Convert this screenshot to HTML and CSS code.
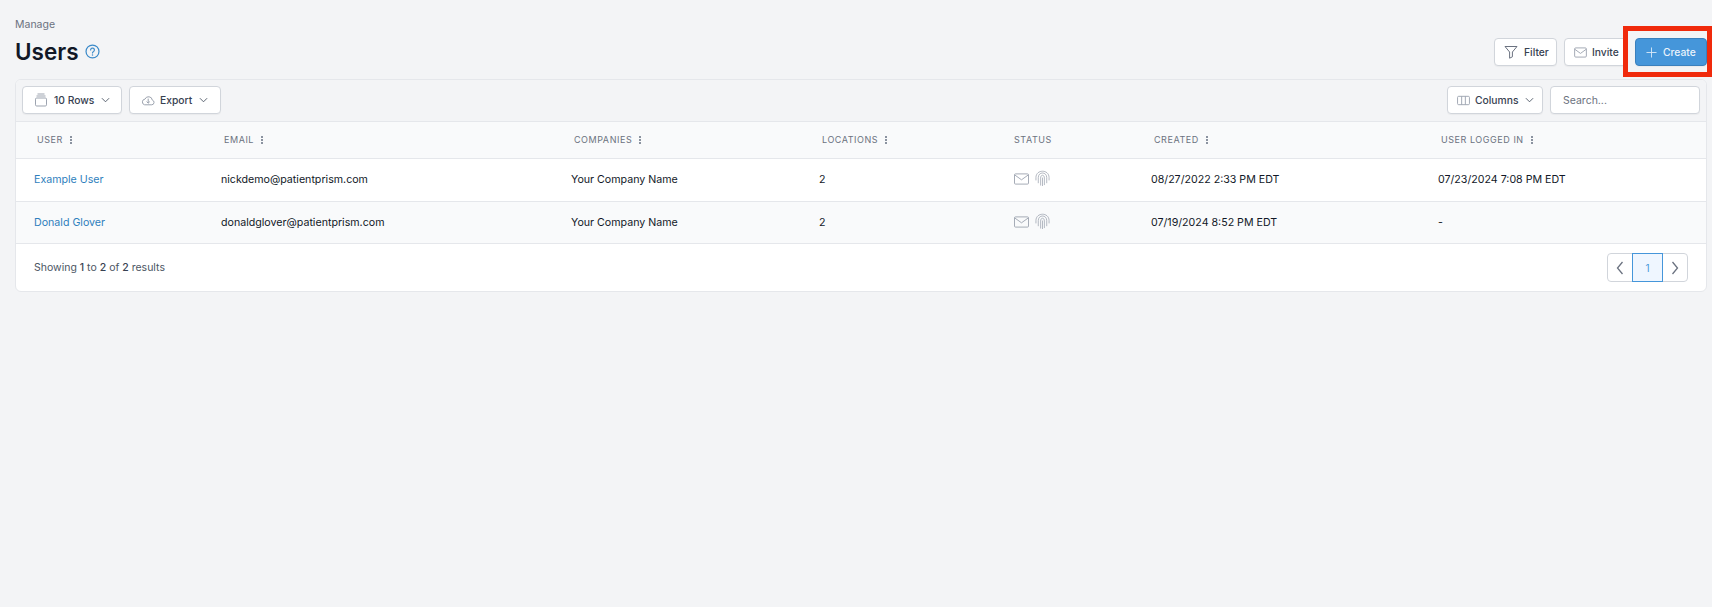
FILE: index.html
```html
<!DOCTYPE html>
<html lang="en">
<head>
<meta charset="utf-8">
<title>Users</title>
<link rel="stylesheet" href="styles.css">
</head>
<body>
<header class="page-head">
  <div class="titles">
    <div class="crumb">Manage</div>
    <div class="title-row">
      <h1>Users</h1>
      <svg class="help" viewBox="0 0 16 16"><circle cx="8" cy="8" r="6.900"/><path d="M6 6.300a2 2 0 1 1 3.100 1.700c-.7.4-1.100.8-1.100 1.600"/><circle class="dot" cx="8" cy="11.700" r=".8"/></svg>
    </div>
  </div>
  <div class="actions">
    <button class="btn btn-filter"><svg class="ic ic-filter" viewBox="0 0 14 14"><path d="M1 1.500h12L8.400 7v4.800l-2.800 1.400V7z"/></svg>Filter</button>
    <button class="btn btn-invite"><svg class="ic ic-mail" viewBox="0 0 14 12"><rect x=".6" y="1" width="12.800" height="10" rx="1.200"/><path d="M.8 2.500 7 7l6.200-4.500"/></svg>Invite</button>
    <span class="create-wrap">
      <button class="btn btn-primary"><svg class="ic ic-plus" viewBox="0 0 12 12"><path d="M6 .5v11M.5 6h11"/></svg>Create</button>
      <span class="highlight"></span>
    </span>
  </div>
</header>
<main class="card">
  <div class="toolbar">
    <div class="tool-group">
      <button class="btn btn-rows"><svg class="ic ic-rows" viewBox="0 0 14 14"><path d="M3.500 1h7M2.500 3h9"/><rect x="1.500" y="5" width="11" height="8" rx="1.200"/></svg>10 Rows<svg class="chev" viewBox="0 0 10 6"><path d="M1 1l4 4 4-4"/></svg></button>
      <button class="btn btn-export"><svg class="ic ic-cloud" viewBox="0 0 14 11"><path d="M3.600 9.800h7.200a2.400 2.400 0 0 0 .5-4.700 3.800 3.800 0 0 0-7.300-1A2.900 2.900 0 0 0 3.600 9.800z"/><path d="M7.200 3.600v4.400M5.600 6.600l1.600 1.600 1.600-1.600"/></svg>Export<svg class="chev" viewBox="0 0 10 6"><path d="M1 1l4 4 4-4"/></svg></button>
    </div>
    <div class="tool-group">
      <button class="btn btn-cols"><svg class="ic ic-cols" viewBox="0 0 14 11"><rect x=".6" y="1" width="12.800" height="9" rx="1.200"/><path d="M5 1v9M9 1v9"/></svg>Columns<svg class="chev" viewBox="0 0 10 6"><path d="M1 1l4 4 4-4"/></svg></button>
      <input class="search" type="text" placeholder="Search...">
    </div>
  </div>
  <div class="row head">
    <div class="h">USER<i class="kebab"></i></div>
    <div class="h">EMAIL<i class="kebab"></i></div>
    <div class="h">COMPANIES<i class="kebab"></i></div>
    <div class="h">LOCATIONS<i class="kebab"></i></div>
    <div class="h h-plain">STATUS</div>
    <div class="h">CREATED<i class="kebab"></i></div>
    <div class="h">USER LOGGED IN<i class="kebab"></i></div>
  </div>
  <div class="row body first">
    <div><a href="#">Example User</a></div>
    <div>nickdemo@patientprism.com</div>
    <div>Your Company Name</div>
    <div>2</div>
    <div class="status">
      <svg class="st-mail" viewBox="0 0 15 12"><rect x=".5" y=".9" width="14" height="10.200" rx="1"/><path d="M.8 2l6.700 4.800L14.200 2"/></svg>
      <svg class="st-finger" viewBox="0 0 16 18"><path d="M1 11V8C1-1 15-1 15 8V11M3.500 14V8C3.500 1.500 12.500 1.500 12.500 8V14M6 16.500V8.500C6 4.500 10 4.500 10 8.500V16M8 8V17"/></svg>
    </div>
    <div>08/27/2022 2:33 PM EDT</div>
    <div>07/23/2024 7:08 PM EDT</div>
  </div>
  <div class="row body alt">
    <div><a href="#">Donald Glover</a></div>
    <div>donaldglover@patientprism.com</div>
    <div>Your Company Name</div>
    <div>2</div>
    <div class="status">
      <svg class="st-mail" viewBox="0 0 15 12"><rect x=".5" y=".9" width="14" height="10.200" rx="1"/><path d="M.8 2l6.700 4.800L14.200 2"/></svg>
      <svg class="st-finger" viewBox="0 0 16 18"><path d="M1 11V8C1-1 15-1 15 8V11M3.500 14V8C3.500 1.500 12.500 1.500 12.500 8V14M6 16.500V8.500C6 4.500 10 4.500 10 8.500V16M8 8V17"/></svg>
    </div>
    <div>07/19/2024 8:52 PM EDT</div>
    <div>-</div>
  </div>
  <footer class="foot">
    <div class="results">Showing <b>1</b> to <b>2</b> of <b>2</b> results</div>
    <nav class="pager">
      <span class="pg"><svg viewBox="0 0 8 14"><path d="M6.500 1 1.500 7l5 6"/></svg></span>
      <span class="pg cur">1</span>
      <span class="pg"><svg viewBox="0 0 8 14"><path d="M1.500 1l5 6-5 6"/></svg></span>
    </nav>
  </footer>
</main>
</body>
</html>
```
FILE: styles.css
```css
* { box-sizing: border-box; }
html, body { margin: 0; height: 100%; }
body {
  background: #f3f4f6;
  font-family: Inter, "Liberation Sans", sans-serif;
  font-size: 12px;
  color: #111827;
  padding: 0 5px 0 15px;
  overflow: hidden;
}
.page-head {
  display: flex;
  justify-content: space-between;
  align-items: flex-end;
  height: 79px;
  padding-bottom: 13px;
}
.crumb { font-size: 10.500px; line-height: 16px; color: #6b7280; margin-top: 16px; margin-bottom: 5px; }
.title-row { display: flex; align-items: center; gap: 6px; height: 28px; }
h1 { margin: 0; font-size: 22.500px; line-height: 28px; font-weight: 600; color: #111827; }
.help { width: 15px; height: 15px; margin-top: -2px; fill: none; stroke: #3b8ac9; stroke-width: 1.300; stroke-linecap: round; }
.help .dot { fill: #3b8ac9; stroke: none; }
.actions { display: flex; gap: 7px; align-items: center; }
.btn {
  display: inline-flex;
  align-items: center;
  height: 28px;
  padding: 0 0 0 11px;
  background: #fff;
  border: 1px solid #d1d5db;
  border-radius: 4px;
  font: 500 10.300px Inter, "Liberation Sans", sans-serif;
  color: #374151;
  box-shadow: 0 1px 1px rgba(0,0,0,.04);
}
.btn-filter { width: 63px; padding-left: 9px; }
.btn-invite { width: 64px; padding-left: 9px; }
.btn-rows { width: 100px; }
.btn-export { width: 92px; }
.btn-cols { width: 96px; padding-left: 9px; }
.ic { fill: none; stroke: #9ca3af; stroke-width: 1; margin-right: 7px; flex: none; }
.ic-filter { width: 14px; height: 14px; margin-right: 6px; stroke: #6b7280; }
.ic-mail { width: 13px; height: 11px; margin-right: 5px; }
.ic-plus { width: 11px; height: 11px; stroke: #d6e8f7; margin-right: 6px; }
.ic-rows { width: 14px; height: 14px; margin-right: 6px; }
.ic-cloud { width: 14px; height: 11px; margin-right: 5px; }
.ic-cols { width: 13px; height: 11px; margin-right: 5px; }
.chev { width: 9px; height: 6px; margin-left: 7px; fill: none; stroke: #4b5563; stroke-width: 1; }
.create-wrap { position: relative; display: inline-flex; }
.highlight {
  position: absolute;
  top: -12px;
  left: -12px;
  right: -5px;
  bottom: -11px;
  border: 5px solid #f02a0c;
}
.btn-primary {
  width: 72px;
  background: #4596da;
  border-color: #3a80bd;
  color: #eaf3fb;
  padding-left: 10px;
}
.card {
  background: #fff;
  border: 1px solid #e5e7eb;
  border-radius: 6px;
  overflow: hidden;
}
.toolbar {
  display: flex;
  justify-content: space-between;
  height: 42px;
  padding: 6px 6px 0;
  background: #f3f4f6;
  border-bottom: 1px solid #e5e7eb;
}
.tool-group { display: flex; gap: 7px; }
.search {
  width: 150px;
  height: 28px;
  padding: 0 12px;
  background: #fff;
  border: 1px solid #d1d5db;
  border-radius: 4px;
  font: 400 10.500px Inter, "Liberation Sans", sans-serif;
  box-shadow: 0 1px 1px rgba(0,0,0,.04);
}
.search::placeholder { color: #6b7280; }
.row {
  display: grid;
  grid-template-columns: 187px 350px 248px 195px 137px 287px 1fr;
  align-items: center;
  padding-left: 18px;
  border-bottom: 1px solid #e5e7eb;
}
.head { height: 37px; background: #f9fafb; }
.h { display: flex; align-items: center; padding-left: 3px; font-size: 9px; font-weight: 400; letter-spacing: .55px; color: #6b7280; margin-top: -1px; }
.h-plain { padding-left: 0; }
.kebab {
  width: 2px;
  height: 8px;
  margin-left: 7px;
  background: radial-gradient(circle at 1px 1px, #8b93a0 .8px, transparent .9px) 0 0 / 2px 3px;
}
.body { height: 43px; font-size: 10.650px; color: #111827; }
.body.first { padding-bottom: 1px; }
.body.alt { height: 42px; background: #f9fafb; }
.body a { color: #2f7fbd; text-decoration: none; }
.status { display: flex; align-items: center; gap: 6px; margin-top: -2px; }
.st-mail { width: 15px; height: 12px; fill: none; stroke: #9ca3af; stroke-width: .9; }
.st-finger { width: 15px; height: 17px; fill: none; stroke: #9ca3af; stroke-width: .8; }
.foot {
  display: flex;
  justify-content: space-between;
  align-items: center;
  height: 47px;
  padding: 0 18px;
}
.results { font-size: 10.500px; color: #4b5563; }
.results b { font-weight: 500; color: #374151; }
.pager { display: flex; height: 29px; border: 1px solid #d1d5db; border-radius: 4px; background: #fff; }
.pg { display: flex; align-items: center; justify-content: center; width: 24px; font-size: 10px; }
.pg svg { width: 8px; height: 14px; fill: none; stroke: #6b7280; stroke-width: 1.300; }
.pg.cur { width: 31px; margin: -1px 0; background: #eff6ff; border: 1px solid #4596da; color: #4596da; }
```
